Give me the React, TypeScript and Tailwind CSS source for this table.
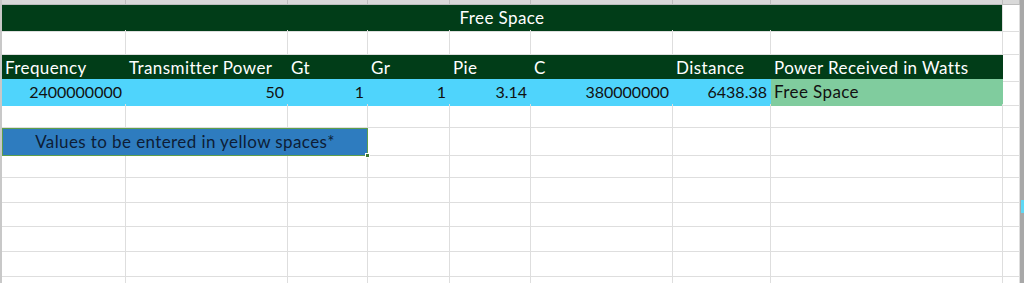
import React from 'react';

const cols = 'grid grid-cols-[124px_162px_80px_82px_81px_142px_98px_232px_17px]';
const heights = ['h-[25px]', 'h-[25px]', 'h-[24px]', 'h-[25px]', 'h-[24px]', 'h-[25px]', 'h-[25px]', 'h-[25px]', 'h-[24px]', 'h-[25px]', 'h-[25px]', 'h-[24px]'];

const Cell = ({ className = '', children }: { className?: string; children?: React.ReactNode }) => (
  <div className={`border-r border-b border-[#dedede] flex items-center px-[3px] whitespace-nowrap overflow-visible ${className}`}>
    {children}
  </div>
);

const headers = ['Frequency', 'Transmitter Power', 'Gt', 'Gr', 'Pie', 'C', 'Distance', 'Power Received in Watts'];
const values = ['2400000000', '50', '1', '1', '3.14', '380000000', '6438.38'];

const EmptyRow = ({ h }: { h: string }) => (
  <div className={`${cols} ${h} shrink-0`}>
    {Array.from({ length: 9 }).map((_, i) => (
      <Cell key={i} />
    ))}
  </div>
);

export default function App() {
  return (
    <div className="w-[1024px] h-[283px] overflow-hidden bg-white flex font-['Lato',sans-serif] text-[17px] tracking-[0.4px] text-[#111]">
      <div className="w-[2px] bg-[#c8c8c8] shrink-0" />
      <div className="flex-1 flex flex-col overflow-hidden">
        {/* column header strip */}
        <div className={`${cols} h-[5px] bg-[#d9d9d9] shrink-0`}>
          {Array.from({ length: 9 }).map((_, i) => (
            <div key={i} className="border-r border-b border-[#bdbdbd]" />
          ))}
        </div>
        {/* title */}
        <div className={`${cols} ${heights[0]} shrink-0`}>
          <Cell className="col-span-8 justify-center bg-[#013d18] border-[#013d18] text-white">Free Space</Cell>
          <Cell />
        </div>
        <EmptyRow h={heights[1]} />
        {/* headers */}
        <div className={`${cols} ${heights[2]} shrink-0`}>
          {headers.map((h) => (
            <Cell key={h} className="bg-[#013d18] border-r-[#013d18] border-b-[#013d18] text-white">
              {h}
            </Cell>
          ))}
          <Cell />
        </div>
        {/* data */}
        <div className={`${cols} ${heights[3]} shrink-0`}>
          {values.map((v, i) => (
            <Cell key={i} className="justify-end bg-[#4fd4fc] border-r-[#4fd4fc] border-b-[#4fd4fc] text-[16px] tracking-normal">
              {v}
            </Cell>
          ))}
          <Cell className="bg-[#80cc9e] border-r-[#80cc9e] border-b-[#80cc9e]">Free Space</Cell>
          <Cell />
        </div>
        <EmptyRow h={heights[4]} />
        {/* note */}
        <div className={`${cols} ${heights[5]} shrink-0`}>
          <div className="col-span-3 relative bg-[#2e7cbf] border border-[#5e9e4c] flex items-center justify-center text-[#0d1d36]">
            Values to be entered in yellow spaces*
            <span className="absolute -right-[3px] -bottom-[3px] w-[5px] h-[5px] bg-[#3f7a2f] border border-white" />
          </div>
          {Array.from({ length: 6 }).map((_, i) => (
            <Cell key={i} />
          ))}
        </div>
        {heights.slice(6).map((h, i) => (
          <EmptyRow key={i} h={h} />
        ))}
      </div>
      <div className="w-[4px] shrink-0 bg-[#a8a8a8] relative">
        <div className="absolute top-[200px] left-[1px] w-[3px] h-[13px] bg-[#5ed8f5]" />
      </div>
    </div>
  );
}
